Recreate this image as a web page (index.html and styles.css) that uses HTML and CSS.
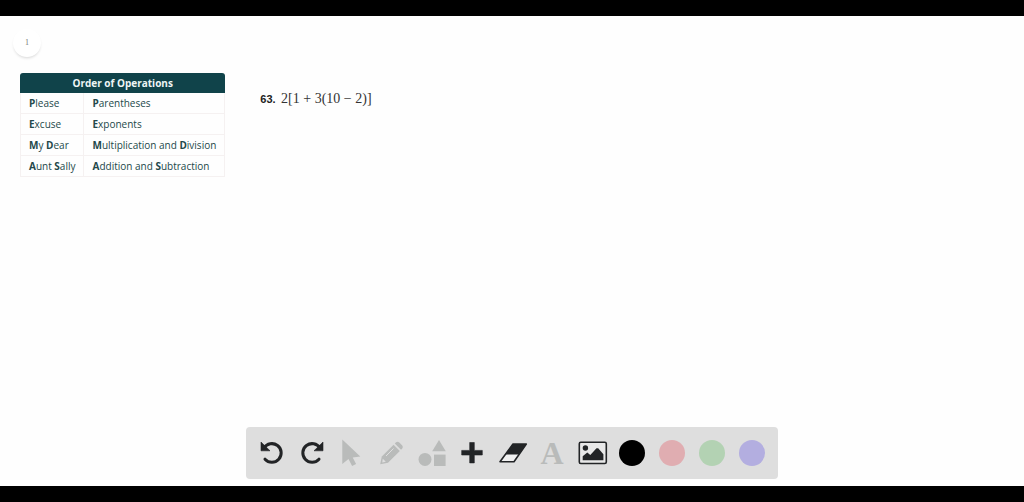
FILE: index.html
```html
<!DOCTYPE html>
<html lang="en">
<head>
  <meta charset="UTF-8" />
  <meta name="viewport" content="width=device-width, initial-scale=1" />
  <title>Order of Operations</title>
  <link rel="stylesheet" href="styles.css">
</head>
<body>

  <main class="board">
    <div class="page-badge">1</div>

    <div class="content">
      <table class="pemdas">
        <thead>
          <tr><th colspan="2">Order of Operations</th></tr>
        </thead>
        <tbody>
          <tr><td><b>P</b>lease</td><td><b>P</b>arentheses</td></tr>
          <tr><td><b>E</b>xcuse</td><td><b>E</b>xponents</td></tr>
          <tr><td><b>M</b>y <b>D</b>ear</td><td><b>M</b>ultiplication and <b>D</b>ivision</td></tr>
          <tr><td><b>A</b>unt <b>S</b>ally</td><td><b>A</b>ddition and <b>S</b>ubtraction</td></tr>
        </tbody>
      </table>

      <p class="problem"><b class="problem-number">63.</b> 2[1 + 3(10 − 2)]</p>
    </div>

    <div class="toolbar" role="toolbar" aria-label="Drawing tools">
      <button type="button" class="tool" aria-label="Undo">
        <svg viewBox="0 0 40 40">
          <path d="M12 15A9.3 9.3 0 1 1 13 26.2" fill="none" stroke="currentColor" stroke-width="3" stroke-linecap="round"/>
          <path d="M9 9v8.800h9z" fill="currentColor" stroke="currentColor" stroke-width="0.6"/>
        </svg>
      </button>
      <button type="button" class="tool" aria-label="Redo">
        <svg viewBox="0 0 40 40">
          <path d="M28 15A9.3 9.3 0 1 0 27 26.2" fill="none" stroke="currentColor" stroke-width="3" stroke-linecap="round"/>
          <path d="M31 9v8.800h-9z" fill="currentColor" stroke="currentColor" stroke-width="0.6"/>
        </svg>
      </button>
      <button type="button" class="tool muted" aria-label="Select">
        <svg viewBox="0 0 40 40">
          <path d="M10.3 6.5V31l6.2-5 3.6 7 4-1.9-3.4-6.6 7.6-1z" fill="currentColor"/>
        </svg>
      </button>
      <button type="button" class="tool muted" aria-label="Pencil">
        <svg viewBox="0 0 40 40">
          <path d="M8.2 31.3l1.6-7.8L21.6 11.7l6.2 6.2L16 29.7z" fill="currentColor"/>
          <path d="M22.8 10.5l1-1c1-1 2.5-1 3.5 0l2.7 2.7c1 1 1 2.5 0 3.5l-1 1z" fill="currentColor"/>
          <path d="M14 23L21.500 15.500" stroke="#dedede" stroke-width="1"/>
          <path d="M10.800 25.800l3 3-3.600.6z" fill="#dedede"/>
        </svg>
      </button>
      <button type="button" class="tool muted" aria-label="Shapes">
        <svg viewBox="0 0 40 40" fill="currentColor">
          <path d="M27 7l6.8 11.3H20.2z"/>
          <circle cx="13" cy="26.4" r="6.5"/>
          <rect x="22" y="21.6" width="11.6" height="11.4"/>
        </svg>
      </button>
      <button type="button" class="tool" aria-label="Add">
        <svg viewBox="0 0 40 40">
          <path d="M17.700 9.500h4.600v7.900h8v4.600h-8v7.900h-4.600V22h-8v-4.600h8z" fill="currentColor" stroke="currentColor" stroke-width="0.6" stroke-linejoin="round"/>
        </svg>
      </button>
      <button type="button" class="tool" aria-label="Eraser">
        <svg viewBox="0 0 40 40">
          <path d="M21 11h13.3L22 28.8H8z" fill="#f0f0f0" stroke="currentColor" stroke-width="1.6" stroke-linejoin="round"/>
          <path d="M21 11h13.3L27 21.5H13.2z" fill="currentColor"/>
        </svg>
      </button>
      <button type="button" class="tool tool-text muted" aria-label="Text">A</button>
      <button type="button" class="tool" aria-label="Image">
        <svg viewBox="0 0 40 40">
          <rect x="7.3" y="9.3" width="27" height="21.2" rx="1.5" fill="#e8e8e8" stroke="currentColor" stroke-width="1.6"/>
          <circle cx="13.4" cy="15" r="2.7" fill="currentColor"/>
          <path d="M10.7 27.3v-4l4.6-3.8 3 2.5 6.2-6.8h1.7l5.2 6v6.1z" fill="currentColor"/>
        </svg>
      </button>
      <button type="button" class="tool" aria-label="Black"><span class="swatch black"></span></button>
      <button type="button" class="tool" aria-label="Red"><span class="swatch red"></span></button>
      <button type="button" class="tool" aria-label="Green"><span class="swatch green"></span></button>
      <button type="button" class="tool" aria-label="Purple"><span class="swatch purple"></span></button>
    </div>
  </main>

</body>
</html>
```
FILE: styles.css
```css
* {
  box-sizing: border-box;
}

body {
  margin: 0;
  padding: 16px 0;
  min-height: 100vh;
  background: #000;
  display: flex;
  flex-direction: column;
  font-family: "Open Sans", "Noto Sans", sans-serif;
}

.board {
  flex: 1;
  display: flex;
  flex-direction: column;
  background: #fefefe;
  padding: 13px 20px 7px 13px;
}

.page-badge {
  width: 28px;
  height: 28px;
  border-radius: 50%;
  background: #fff;
  box-shadow: 0 2px 3px -1px rgba(0, 0, 0, 0.16);
  color: #777;
  font-family: "Liberation Serif", serif;
  font-size: 8px;
  line-height: 28px;
  text-align: center;
}

.content {
  display: flex;
  align-items: flex-start;
  gap: 35px;
  margin: 16px 0 24px 7px;
}

.pemdas {
  border-collapse: separate;
  border-spacing: 0;
  color: #23484a;
  font-size: 10px;
  line-height: 20px;
}

.pemdas th {
  padding: 0;
  background: #10434a;
  border-radius: 3px 3px 0 0;
  color: #eef5f5;
  font-weight: 700;
}

.pemdas td {
  padding: 0 8px;
  border-right: 1px solid #f5f1f1;
  border-bottom: 1px solid #f5f1f1;
}

.pemdas td:first-child {
  border-left: 1px solid #f5f1f1;
}

.problem {
  margin: 16px 0 0;
  color: #333;
  font-family: "Liberation Serif", serif;
  font-size: 14px;
  line-height: 20px;
}

.problem-number {
  margin-right: 2px;
  color: #222;
  font-family: "Liberation Sans", sans-serif;
  font-size: 11px;
}

.toolbar {
  display: flex;
  align-self: center;
  align-items: center;
  margin-top: auto;
  margin-left: 7px;
  padding: 6px;
  border-radius: 4px;
  background: #dedede;
}

.tool {
  display: flex;
  align-items: center;
  justify-content: center;
  width: 40px;
  height: 40px;
  padding: 0;
  border: none;
  background: transparent;
  color: #222426;
  cursor: pointer;
}

.tool svg {
  width: 40px;
  height: 40px;
}

.muted {
  color: #b9bbba;
}

.tool-text {
  font-family: "Liberation Serif", serif;
  font-size: 32px;
  font-weight: 700;
  line-height: 40px;
}

.swatch {
  width: 26px;
  height: 26px;
  border-radius: 50%;
}

.black {
  background: #000;
}

.red {
  background: #e0adb1;
}

.green {
  background: #b3d2b3;
}

.purple {
  background: #b3aee0;
}
```
